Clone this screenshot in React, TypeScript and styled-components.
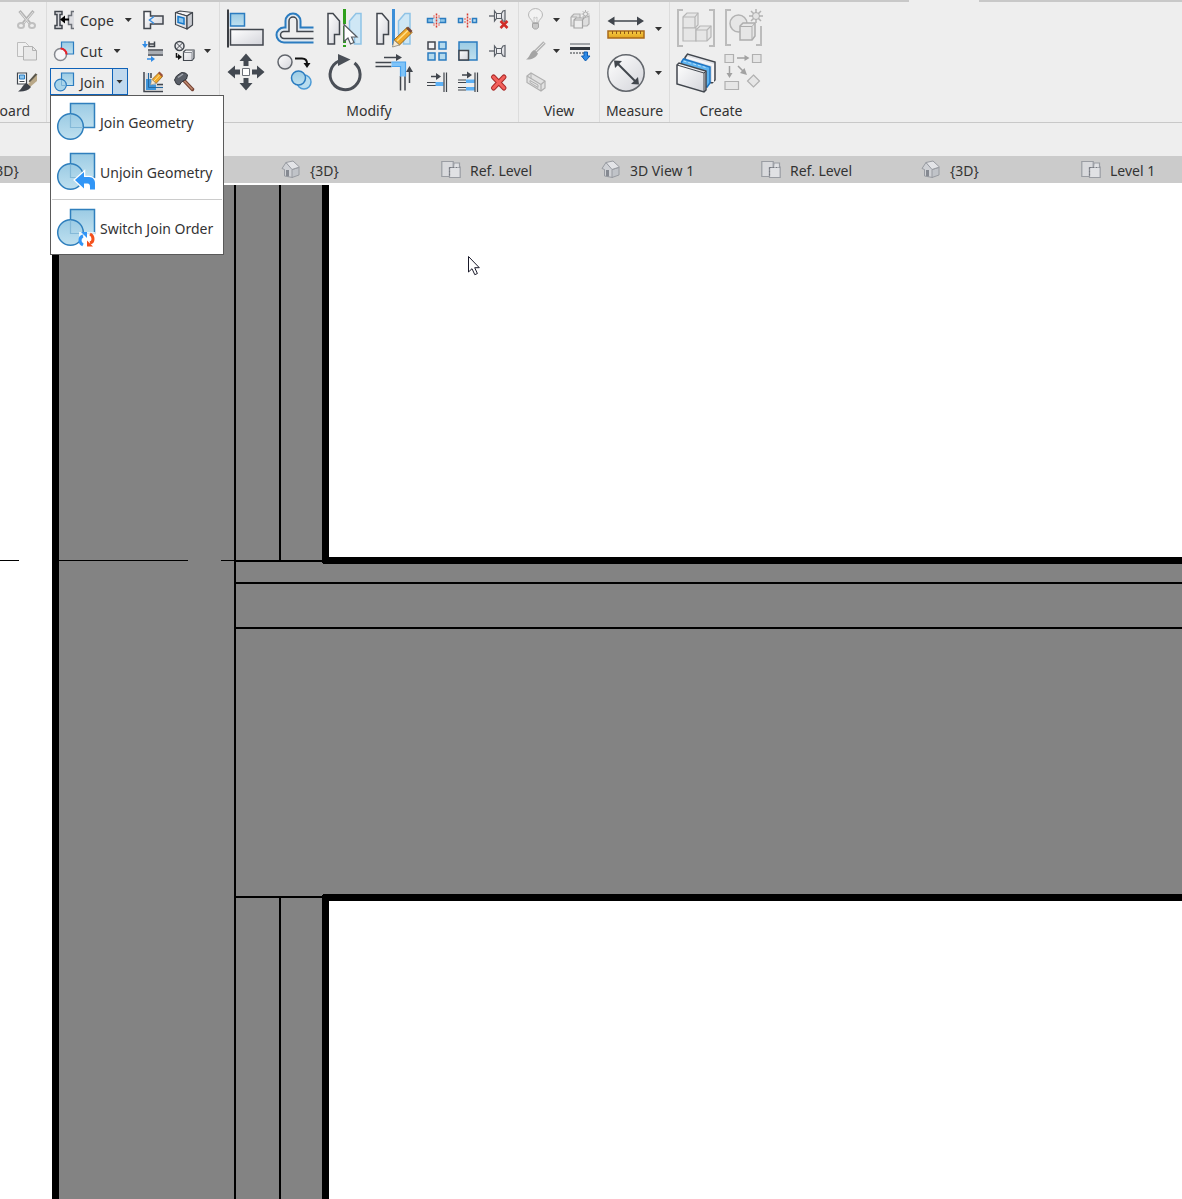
import React from "react";
import styled, { createGlobalStyle } from "styled-components";

const INK = "#41464d";
const BLUE = "#2b7cc0";
const MUTE = "#b0b0b0";

const GlobalStyle = createGlobalStyle`
  * { box-sizing: border-box; }
  body {
    margin: 0;
    background: #fff;
    color: #333;
    font: 14px/20px "Noto Sans", "Open Sans", sans-serif;
  }
  button {
    margin: 0;
    padding: 0;
    border: 0;
    background: none;
    color: inherit;
    font: inherit;
  }
`;

const Page = styled.div`
  display: flex;
  flex-direction: column;
  min-height: 100vh;
  overflow: hidden;
`;

const RibbonTabs = styled.div`
  display: flex;
  height: 2px;
  padding-left: 909px;
  background: #c8c8c8;
`;

const ActiveRibbonTab = styled.div`
  width: 70px;
  background: #eee;
`;

const Ribbon = styled.header`
  display: flex;
  height: 121px;
  background: #eee;
  border-bottom: 1px solid #c8c8c8;
`;

const Group = styled.section<{ $width: number; $last?: boolean }>`
  display: flex;
  flex: none;
  flex-direction: column;
  width: ${(p) => p.$width}px;
  padding-bottom: 1px;
  border-right: ${(p) => (p.$last ? 0 : 1)}px solid #dcdcdc;
`;

const GroupLabel = styled.h2<{ $clipped?: boolean }>`
  display: flex;
  justify-content: ${(p) => (p.$clipped ? "flex-end" : "center")};
  margin: auto 0 0;
  padding-right: ${(p) => (p.$clipped ? 16 : 0)}px;
  overflow: hidden;
  font-size: 14px;
  font-weight: 400;
  line-height: 20px;
`;

const Tools = styled.div<{ $columns: string; $left?: number }>`
  display: grid;
  grid-template-columns: ${(p) => p.$columns};
  grid-auto-rows: 27px;
  row-gap: 4px;
  justify-content: start;
  justify-items: start;
  padding: 4px 0 0 ${(p) => p.$left ?? 0}px;
`;

const LargeTools = styled.div<{ $columns: number; $gap?: number }>`
  display: grid;
  grid-template-columns: repeat(${(p) => p.$columns}, auto);
  gap: 6px ${(p) => p.$gap ?? 11}px;
  justify-content: start;
  padding: 8px 0 0 7px;
`;

const GroupBody = styled.div`
  display: flex;
  align-items: flex-start;
  gap: 15px;
`;

const ToolButton = styled.button<{ $gap?: number }>`
  display: flex;
  align-items: center;
  gap: ${(p) => p.$gap ?? 11}px;
  padding: 4px 0 3px;
`;

const LargeButton = styled.button`
  display: flex;
  align-items: center;
  gap: 10px;
`;

const LabelledTool = styled(ToolButton)`
  padding-left: 4px;
`;

const IconText = styled.span`
  display: flex;
  align-items: center;
  gap: 6px;
`;

const Label = styled.span`
  padding-top: 2px;
  line-height: 18px;
`;

const SplitButton = styled.div`
  position: relative;
  display: flex;
  height: 27px;
  border: 1px solid #0f62b8;
`;

const SplitMain = styled.button`
  padding: 3px 7px 2px 3px;
`;

const SplitArrow = styled.button`
  display: flex;
  align-items: center;
  justify-content: center;
  width: 15px;
  background: #c1d9ee;
  border-left: 1px solid #0f62b8;
`;

const Caret = styled.span`
  width: 7px;
  height: 4px;
  background: #333;
  clip-path: polygon(0 0, 100% 0, 50% 100%);
`;

const Menu = styled.div`
  position: absolute;
  z-index: 2;
  top: 26px;
  left: -1px;
  width: 174px;
  padding: 1px 0;
  background: #fff;
  border: 1px solid #5a5a5a;
`;

const MenuItem = styled.button`
  display: flex;
  align-items: center;
  gap: 5px;
  width: 100%;
  height: 50px;
  padding-left: 6px;
  white-space: nowrap;
`;

const MenuDivider = styled.hr`
  height: 1px;
  margin: 2px 1px 3px;
  border: 0;
  background: #ccc;
`;

const OptionsBar = styled.div`
  height: 33px;
  background: #eee;
`;

const ViewTabs = styled.nav`
  display: flex;
  height: 27px;
  padding-top: 1px;
  margin-left: -40px;
  overflow: hidden;
  background: #cbcbcb;
`;

const ViewTab = styled.button`
  display: flex;
  flex: none;
  align-items: center;
  gap: 9px;
  width: 160px;
  padding-left: 1px;
  white-space: nowrap;
`;

const Drawing = styled.main`
  display: flex;
  flex: 1;
  min-height: 1016px;
  background: #fff;
`;

const DrawingSvg = styled.svg`
  display: block;
  flex: 1;
  width: 100%;
`;

const Svg = styled.svg`
  display: block;
  flex: none;
  overflow: visible;
`;

const HiddenDefs = styled.svg`
  position: absolute;
  width: 0;
  height: 0;
`;

type IconProps = { size?: number; children: React.ReactNode };

const Icon = ({ size = 20, children }: IconProps) => (
  <Svg width={size} height={size} viewBox={`0 0 ${size} ${size}`} fill="none" aria-hidden="true">
    {children}
  </Svg>
);

const Gradients = () => (
  <HiddenDefs aria-hidden="true">
    <defs>
      <linearGradient id="sky" x1="0" y1="0" x2="0" y2="1">
        <stop offset="0" stopColor="#9bcbe4" />
        <stop offset="1" stopColor="#bfe0ef" />
      </linearGradient>
      <linearGradient id="steel" x1="0" y1="0" x2="1" y2="1">
        <stop offset="0" stopColor="#ffffff" />
        <stop offset="1" stopColor="#d3d4da" />
      </linearGradient>
      <linearGradient id="gold" x1="0" y1="0" x2="0" y2="1">
        <stop offset="0" stopColor="#f7cd4a" />
        <stop offset="1" stopColor="#e3a51b" />
      </linearGradient>
    </defs>
  </HiddenDefs>
);

/* ---------- small icons, 20 x 20 ---------- */

const ScissorsIcon = () => (
  <Icon>
    <path d="M2.500 1l11 13M16.500 1L5.500 14" stroke="#b4b4b4" strokeWidth="3" />
    <path d="M3 2l9 11M16 2L7 13" stroke="#e2e2e2" strokeWidth="1" />
    <ellipse cx="4" cy="15.500" rx="3" ry="2.500" stroke="#c0c0c0" strokeWidth="2" />
    <ellipse cx="15" cy="15.500" rx="3" ry="2.500" stroke="#c0c0c0" strokeWidth="2" />
  </Icon>
);

const CopyPagesIcon = () => (
  <Icon>
    <path d="M.5 1.500h8l3 3v11H.5z" fill="#f0f0f0" stroke="#bdbdbd" />
    <path d="M6.500 5.500h9l4 4v9.500h-13z" fill="#e9e9e9" stroke="#b2b2b2" />
    <path d="M15.500 5.500v4h4" stroke="#b2b2b2" />
  </Icon>
);

const MatchTypeIcon = () => (
  <Icon>
    <path d="M.5 1h9v11H.5z" fill="#fff" stroke={INK} strokeWidth="1.200" />
    <path d="M2.500 3h5v4h-5z" fill="#8ec6ee" stroke={BLUE} />
    <path d="M2.500 9.500h5" stroke={INK} />
    <path d="M19.500 2l-7 8" stroke="#5a564b" strokeWidth="2.500" />
    <path d="M20 3v6l-7 6-2-3z" fill="#b9a888" />
    <path d="M9.500 11l4.500 4c-3 4-8 5-13 4.500 4-2 4.500-7 8.500-8.500z" fill="#3c4149" />
  </Icon>
);

const CopeIcon = () => (
  <Icon>
    <path d="M1 1.500h7v3H6v11h2v3H1v-3h2v-11H1z" fill="#dcdde1" stroke={INK} strokeWidth="1.500" />
    <path d="M20 1.500h-2.500v4h-3v9h3v4H20" fill="#dcdde1" stroke="#6d7178" strokeWidth="1.500" />
    <path d="M15 9.500H9" stroke="#000" strokeWidth="2" />
    <path d="M6 9.500l5-4v8z" fill="#000" />
  </Icon>
);

const CutGeometryIcon = () => (
  <Icon>
    <path d="M7.500 1h12v12h-12z" fill="url(#sky)" stroke={BLUE} strokeWidth="1.200" />
    <circle cx="6.500" cy="13.500" r="6" fill="#f6f6f8" stroke="#85888e" strokeWidth="1.500" />
    <path d="M6.500 7.500a6 6 0 0 1 6 6" stroke="#e8202a" strokeWidth="2" />
  </Icon>
);

const JoinIcon = () => (
  <Icon>
    <path d="M7.500 1h12v12.500h-12z" fill="url(#sky)" stroke={BLUE} strokeWidth="1.200" />
    <circle cx="6.500" cy="13" r="5.800" fill="#a9d4ea" stroke={BLUE} strokeWidth="1.200" />
    <path d="M7.500 8v5.500h4.500" stroke="#79b3d8" />
  </Icon>
);

const WallJoinIcon = () => (
  <Icon>
    <path d="M1 1.500h6.500v4.500H20v8H7.500v4.500H1z" fill="url(#steel)" stroke={INK} strokeWidth="1.500" />
    <path d="M11 6.500L6.500 10l4.500 3.500" stroke="#3a8ee0" strokeWidth="1.500" />
  </Icon>
);

const WallOpeningIcon = () => (
  <Icon>
    <path d="M1.500 2.500L6 1l12.500 1.500L13 6z" fill="#f4f4f6" stroke={INK} strokeWidth="1.200" strokeLinejoin="round" />
    <path d="M1.500 2.500L13 6v13L1.500 14.500z" fill="url(#steel)" stroke={INK} strokeWidth="1.200" strokeLinejoin="round" />
    <path d="M13 6l5.500-3.500V15L13 19z" fill="#c9cbd1" stroke={INK} strokeWidth="1.200" strokeLinejoin="round" />
    <path d="M4 6.500L10 8v6l-6-1.500z" fill="#8ec6ee" stroke="#1577c8" strokeWidth="1.500" />
  </Icon>
);

const BeamJoinIcon = () => (
  <Icon>
    <path d="M2 0v4" stroke="#2f8be6" strokeWidth="1.500" />
    <path d="M-1 3h6l-3 4z" fill="#2f8be6" />
    <path d="M6 .5v5h5.500v-5M6 3h5.500" stroke={INK} strokeWidth="1.500" />
    <path d="M5 9h15M5 14h15" stroke={INK} strokeWidth="1.500" />
    <path d="M5 11.500h15" stroke="#aaaeb4" strokeWidth="3" />
    <path d="M4 18h5" stroke="#2f8be6" strokeWidth="1.500" />
    <path d="M8 15l4 3-4 3z" fill="#2f8be6" />
  </Icon>
);

const SplitFaceIcon = () => (
  <Icon>
    <circle cx="5.500" cy="5" r="4.500" fill="#e9e9ec" stroke={INK} strokeWidth="1.500" />
    <path d="M2.500 2l6 6M8.500 2l-6 6" stroke={INK} />
    <path d="M2.500 12v4H5" stroke="#111" strokeWidth="1.500" />
    <path d="M4 13l4 3-4 3z" fill="#111" />
    <path d="M9.500 11l2-2H20v8l-2 2.500H9.500z" fill="url(#steel)" stroke={INK} strokeWidth="1.200" />
    <path d="M9.500 11.500H18V19M18 11.500L20 9" stroke="#888c93" />
  </Icon>
);

const EditProfileIcon = () => (
  <Icon>
    <path d="M2.500 1v17H20v-5.500H8V1z" fill="#d7dade" />
    <path d="M3 7v11h10v-5.500H8V7z" fill="#3f95da" />
    <path d="M5.500 1v14.500H20" stroke="#24679f" />
    <path d="M1 0v19.500h19M8 1v5M14 12.500h6" stroke={INK} strokeWidth="1.500" />
    <path d="M9 7.500L15.500 1l4 3.500-6.500 7z" fill="#f0a92a" stroke="#8f5c14" strokeWidth=".8" />
    <path d="M11 9l6-6.500" stroke="#ffe08a" />
    <path d="M15 1l1.500-1.500L20 3l-1 2z" fill="#99503a" />
    <path d="M9 7.500L7.500 13l5.500-1.500z" fill="#f8ead0" stroke="#8a8a8a" strokeWidth=".6" />
  </Icon>
);

const HammerIcon = () => (
  <Icon>
    <path d="M10 8.500l8.500 9" stroke="#744031" strokeWidth="3.500" strokeLinecap="round" />
    <path d="M10 8.500l8.500 9" stroke="#c08a70" strokeWidth="1.500" />
    <path d="M.5 8l2-4 5-3.500 4 .5 2 2-1 4-5 3-2 3-3-1z" fill="#5a5f68" stroke="#30343a" />
    <path d="M4 5.500l5-3.500" stroke="#a4a8af" strokeWidth="1.500" />
  </Icon>
);

const SplitIcon = () => (
  <Icon>
    <path d="M.5 8.500h6v4h-6zM12.500 8.500h6v4h-6z" fill="#8ec6e8" stroke={BLUE} strokeWidth="1.500" />
    <path d="M6 8.500h7v4H6z" fill="#cfe2ee" />
    <path d="M9.500 3.500v14" stroke="#d8392f" strokeWidth="1.500" strokeDasharray="2 1" />
    <path d="M7 5v3M12 5v3M7 13v3M12 13v3" stroke="#e8756d" />
  </Icon>
);

const SplitGapIcon = () => (
  <Icon>
    <path d="M.5 8.500h4v4h-4zM14.500 8.500h4v4h-4z" fill="#b7dcf0" stroke={BLUE} strokeWidth="1.500" />
    <path d="M9.500 3.500v14" stroke="#d8392f" strokeWidth="1.500" strokeDasharray="2 1" />
    <path d="M7 8v5M12 8v5" stroke="#e0574e" strokeDasharray="2 1" />
  </Icon>
);

const PinShape = ({ y = 0 }: { y?: number }) => (
  <g transform={`translate(0 ${y})`}>
    <path d="M0 7h6" stroke="#6d7178" strokeWidth="1.500" />
    <path
      d="M5.500 2v10l2-2.500h5L14 12l2 .5V1.500L14 2l-1.500 2.500h-5z"
      fill="url(#steel)"
      stroke="#5b6068"
      strokeWidth="1.200"
    />
    <path d="M7.500 4.500v5M12.500 4.500v5" stroke="#5b6068" />
  </g>
);

const UnpinIcon = () => (
  <Icon>
    <PinShape y={-1} />
    <path d="M11.500 11l7 7M18.500 11l-7 7" stroke="#cf2b27" strokeWidth="2.500" />
  </Icon>
);

const PinIcon = () => (
  <Icon>
    <PinShape y={3} />
  </Icon>
);

const ArrayIcon = () => (
  <Icon>
    <path d="M1 1h7v7H1z" fill="#f2f2f4" stroke={INK} strokeWidth="1.500" />
    <path d="M12 1h7v7h-7zM1 12h7v7H1zM12 12h7v7h-7z" fill="#b4daee" stroke={BLUE} strokeWidth="1.500" />
  </Icon>
);

const ScaleIcon = () => (
  <Icon>
    <path d="M1 1h18v18H1z" fill="url(#sky)" stroke={BLUE} strokeWidth="1.500" />
    <path d="M1 9.500h9.500V19H1z" fill="url(#steel)" stroke={INK} strokeWidth="1.500" />
  </Icon>
);

const TrimSingleIcon = () => (
  <Icon>
    <path d="M4 4.500h6" stroke={INK} strokeWidth="1.500" />
    <path d="M9 1l5 3.500L9 8z" fill={INK} />
    <path d="M0 10.500h9M0 13.500h9" stroke={INK} strokeWidth="1.200" />
    <path d="M8.500 10h8v4h-8z" fill="#5cb0f5" />
    <path d="M17 .5V20M19.500 .5V20" stroke={INK} strokeWidth="1.200" />
  </Icon>
);

const TrimMultipleIcon = () => (
  <Icon>
    <path d="M4 3h6" stroke={INK} strokeWidth="1.500" />
    <path d="M9-.5L14 3 9 6.500z" fill={INK} />
    <path d="M0 8h8M0 10.500h8M0 15.500h8M0 18h8" stroke={INK} strokeWidth="1.200" />
    <path d="M8 7.500h9v3.500H8zM8 15h9v3.500H8z" fill="#5cb0f5" />
    <path d="M17 .5V20M19.500 .5V20" stroke={INK} strokeWidth="1.200" />
  </Icon>
);

const DeleteIcon = () => (
  <Icon>
    <path d="M4.500 5l10.500 11M15 5L4.500 16" stroke="#a92a28" strokeWidth="5" strokeLinecap="round" />
    <path d="M4.500 5l10.500 11M15 5L4.500 16" stroke="#f3605b" strokeWidth="3" strokeLinecap="round" />
  </Icon>
);

const BulbIcon = () => (
  <Icon>
    <path d="M6.500 12.500c0-3-4-4-4-7.500a6.500 6 0 0 1 14 0c0 3.500-4 4.500-4 7.500z" fill="#f2f2f2" stroke="#b6b6b6" />
    <path d="M6.500 13.500h6v4l-2 1.500h-2l-2-1.500z" fill="#c8c8c8" stroke="#a6a6a6" />
    <path d="M8 12V7l1.500 1L11 7v5" stroke="#c8c8c8" />
  </Icon>
);

const PaintbrushIcon = () => (
  <Icon>
    <path d="M18.500 1.500L9 11" stroke="#b6b6b6" strokeWidth="3.500" />
    <path d="M18 2l-8 8" stroke="#e2e2e2" />
    <path d="M8 9l4 3.500C10 17 5 19 0 18.500 4 16 4 11 8 9z" fill="#a4a4a4" />
  </Icon>
);

const SectionBoxIcon = () => (
  <Icon>
    <path d="M1 4l4-3 14 8v7l-4 3L1 10.500z" fill="#e2e2e2" stroke={MUTE} strokeWidth="1.200" />
    <path d="M1 4l14 8.500V19M15 12.500L19 9" stroke={MUTE} strokeWidth="1.200" />
    <path d="M4 8.500v2l8 5v-2.500zM5 1v6" stroke={MUTE} />
  </Icon>
);

const DisplaceIcon = () => (
  <Icon>
    <path d="M1 7l3-3h6v4M1 7v9h3M1 7h6M13 7h4l2-1v8l-2 2h-4" stroke={MUTE} strokeWidth="1.200" fill="#dedede" />
    <path d="M4 10l2-2h8l-1.500 2v8H4z" fill="#ededed" stroke="#a4a4a4" strokeWidth="1.200" />
    <path d="M4 10h8.500" stroke="#a4a4a4" />
    <path d="M15.500 0v8M11.500 4h8M12.700 1.200l5.600 5.600M18.300 1.200l-5.600 5.600" stroke="#b4b4b4" />
    <circle cx="15.500" cy="4" r="2" fill="#eee" stroke={MUTE} />
  </Icon>
);

const LineworkIcon = () => (
  <Icon>
    <path d="M0 3h20" stroke="#555b63" strokeWidth="1" />
    <path d="M0 7.500h20" stroke="#31363d" strokeWidth="3" />
    <path d="M0 12h14" stroke="#31363d" strokeWidth="1.200" strokeDasharray="2 1" />
    <path d="M14 11h3.500v4h2.500l-4.500 5-4-5H14z" fill="#2f8be6" stroke="#0f5fb4" />
  </Icon>
);

/* ---------- large icons, 38 x 38 ---------- */

const AlignIcon = () => (
  <Icon size={38}>
    <path d="M3.500 3.500h14v12.500h-14z" fill="url(#sky)" stroke={BLUE} strokeWidth="1.500" />
    <path d="M3.500 19.500h32.500V35H3.500z" fill="url(#steel)" stroke={INK} strokeWidth="1.500" />
    <path d="M1-.5v38" stroke="#3a3d42" strokeWidth="2" />
  </Icon>
);

const OffsetIcon = () => (
  <Icon size={38}>
    <path d="M37.500 17.500H24.500V11a7.500 7.500 0 0 0-15 0v6.500H8a7.500 7.500 0 0 0 0 15h29.500" fill="#e0e9f0" stroke={BLUE} strokeWidth="2" />
    <path d="M37.500 21.500H21V11a4 4 0 0 0-8 0v10.500H8a3.500 3.500 0 0 0 0 7h29.500" fill="#eee" stroke={INK} strokeWidth="1.500" />
  </Icon>
);

const MirrorHalves = () => (
  <>
    <path d="M3 3.500h5l6.500 7.500v13.500H9.500V34H3z" fill="url(#steel)" stroke={INK} strokeWidth="1.500" />
    <path d="M36 3.500h-5L24.500 11v13.500h5V34H36z" fill="#cfe7f5" stroke="#8fc3e6" strokeWidth="1.500" />
  </>
);

const MirrorPickIcon = () => (
  <Icon size={38}>
    <MirrorHalves />
    <path d="M19.500-1v38" stroke="#2fa01c" strokeWidth="3" strokeDasharray="15 2 17 2 3" />
    <path d="M19 14.500v17l4-3.500 2.500 6 3.500-1.500-2.500-5.500h5.500z" fill="#fff" stroke="#555a61" strokeWidth="1.200" />
  </Icon>
);

const MirrorDrawIcon = () => (
  <Icon size={38}>
    <MirrorHalves />
    <path d="M19.500-1v36" stroke="#3d8fd8" strokeWidth="3" />
    <path d="M20 30L33 17.500l5 5L25.500 35z" fill="#f0a92a" stroke="#9a6514" />
    <path d="M23 31l12-11.500" stroke="#ffe08a" strokeWidth="1.500" />
    <path d="M32 18.500l2-2 4.500 4.500-2 2z" fill="#76483a" />
    <path d="M20 30l-1.500 7 7-2z" fill="#f8ead0" stroke="#85817a" strokeWidth=".8" />
  </Icon>
);

const MoveIcon = () => (
  <Icon size={38}>
    <path
      d="M19-.5l6.500 7.500h-4v5h-5V7h-4zM19 36.500L12.500 29h4v-5h5v5h4zM.5 18L8 11.500v4h5v5H8v4zM37.500 18L30 11.500v4h-5v5h5v4z"
      fill="#434951"
    />
    <path d="M15.500 14.500h7v7h-7z" fill="#fff" stroke="#6d7178" />
  </Icon>
);

const CopyIcon = () => (
  <Icon size={38}>
    <circle cx="9" cy="8" r="7" fill="url(#steel)" stroke="#62666d" strokeWidth="1.500" />
    <path d="M19 4.500h7q5 0 5 5" stroke="#111" strokeWidth="2" />
    <path d="M27.500 9h7L31 14z" fill="#111" />
    <circle cx="28" cy="28" r="7" fill="#b9ddef" stroke="#4b9ad6" strokeWidth="1.500" />
    <circle cx="22.500" cy="24" r="7" fill="url(#sky)" stroke={BLUE} strokeWidth="1.500" />
  </Icon>
);

const RotateIcon = () => (
  <Icon size={38}>
    <path d="M14 7A15 15 0 1 0 29.500 9" stroke="#4a4f57" strokeWidth="3" />
    <path d="M13 0v12l12.500-6.500z" fill="#4a4f57" />
  </Icon>
);

const TrimCornerIcon = () => (
  <Icon size={38}>
    <path d="M10 3.500h14" stroke={INK} strokeWidth="1.500" />
    <path d="M22 0l6 3.500L22 7z" fill={INK} />
    <path d="M1.500 8.500h16M1.500 12.500h16M26.500 22v14.500M31 22v14.500" stroke={INK} strokeWidth="1.500" />
    <path d="M17.500 10.500H29v12" stroke="#80c4f8" strokeWidth="5" />
    <path d="M17.500 8h14v14.500M17.500 12.500h9v10" stroke="#4aa3ee" strokeWidth="1.200" />
    <path d="M35.500 29V16" stroke={INK} strokeWidth="1.500" />
    <path d="M32 18l3.500-6 3.500 6z" fill={INK} />
  </Icon>
);

const RulerIcon = () => (
  <Icon size={38}>
    <path d="M5 11h28" stroke={INK} strokeWidth="1.500" />
    <path d="M.5 11l7-4.500v9zM37 11l-7-4.500v9z" fill={INK} />
    <path d="M1 21h36v7H1z" fill="url(#gold)" stroke="#a96a1b" strokeWidth="1.500" />
    <path d="M5.500 21v3M9.500 21v3M13.500 21v3M17.500 21v3M21.500 21v3M25.500 21v3M29.500 21v3M33.500 21v3" stroke="#8d5716" />
  </Icon>
);

const DiameterIcon = () => (
  <Icon size={38}>
    <circle cx="19" cy="19" r="18.200" fill="url(#steel)" stroke="#63676d" strokeWidth="1.500" />
    <path d="M10 9l19 19" stroke={INK} strokeWidth="2" />
    <path d="M7 6.500l8 .5-7 7zM32 30.500l-8-.5 7-7z" fill={INK} />
  </Icon>
);

const AssemblyIcon = () => (
  <Icon size={38}>
    <path d="M6 0H1v36h5M32 0h5v36h-5" stroke="#bcbcbc" strokeWidth="2" />
    <g fill="#e6e6e6" stroke="#b6b6b6" strokeWidth="1.200">
      <path d="M6 7l4-4h11v12l-3 3H6z" />
      <path d="M6 18h13v13H6z" />
      <path d="M19 20l4-4h11v11l-4 4H19z" />
      <path d="M6 7h12v11M18 7l3-4M19 20h11v11M30 20l4-4" fill="none" />
    </g>
  </Icon>
);

const CreateGroupIcon = () => (
  <Icon size={38}>
    <path d="M6 0H1v35h5M31 35h5V16" stroke="#bcbcbc" strokeWidth="2" />
    <circle cx="13.500" cy="13.500" r="8.500" fill="#e6e6e6" stroke="#b3b3b3" strokeWidth="1.500" />
    <path d="M15 16l3-3h12v13l-3 4H15z" fill="#e6e6e6" stroke="#adadad" strokeWidth="1.500" />
    <path d="M15 16.500h12V30M27 16.500l3-3.500" stroke="#adadad" />
    <path d="M31-1v14M24 6h14M26 1l10 10M36 1L26 11" stroke="#b3b3b3" strokeWidth="1.500" />
    <circle cx="31" cy="6" r="3.500" fill="#e4e4e4" stroke="#adadad" />
  </Icon>
);

const PartsIcon = () => (
  <Icon size={38}>
    <path d="M8 3.500L10.500 0 38 8v18l-3 3L8 21z" fill="#dfe1e6" stroke={INK} strokeWidth="1.500" />
    <path d="M10 3.500L36 11v17" stroke="#f7f7f9" strokeWidth="2" />
    <path d="M4.500 8l2-3L33 13v16l-3 4-25-8z" fill="#5db2ee" stroke="#1c75c4" strokeWidth="1.500" />
    <path d="M6.500 7l24 7" stroke="#b7e0fa" strokeDasharray="3 2" />
    <path d="M0 11l2-2 27 8v19l-2 2L0 30z" fill="url(#steel)" stroke={INK} strokeWidth="1.500" />
    <path d="M0 11l27 8v19M27 19l2-2" stroke={INK} strokeWidth="1" />
  </Icon>
);

const SimilarIcon = () => (
  <Icon size={38}>
    <g fill="#e6e6e6" stroke="#b0b0b0" strokeWidth="1.200">
      <path d="M0 .5h8.500v8H0zM27.500 .5h8.500v8h-8.500zM0 27.500h13.500v8H0z" />
      <path d="M28.500 21l6 6-6 6-6-6z" />
    </g>
    <path d="M12 4h9M4.500 12v8M13 12l6 6" stroke="#a2a2a2" strokeWidth="1.500" />
    <path d="M19.500 1l5 3-5 3zM1.500 19h6l-3 5zM22 21l-7-2 4.500-5z" fill="#a2a2a2" />
  </Icon>
);

const JoinLarge = ({ children }: { children?: React.ReactNode }) => (
  <Icon size={38}>
    <path d="M13.500 .5h24v24h-24z" fill="url(#sky)" stroke="#2f7fbd" strokeWidth="1.500" />
    <circle cx="13.500" cy="23.500" r="12.800" fill="url(#sky)" stroke="#2f7fbd" strokeWidth="1.500" />
    <path d="M13.500 11.500v13H26" stroke="#84b9d8" strokeWidth="1.200" />
    {children}
  </Icon>
);

const UndoBadge = () => (
  <path
    d="M18 27l9-8v5h5c4 0 6 3 6 6v6.500h-5v-2.500c0-2-.5-3.500-2.500-3.500H27v5z"
    fill="#3296f6"
    stroke="#fff"
    strokeWidth="2.500"
    paintOrder="stroke"
  />
);

const SwapBadge = () => (
  <>
    <path d="M22 23h16v15H22z" fill="#fff" fillOpacity=".8" />
    <path d="M26 36c-4-2-4-8 0-9" stroke="#3296f6" strokeWidth="3" />
    <path d="M24 23h6v6z" fill="#3296f6" />
    <path d="M33 25c4 2 4 8 0 9" stroke="#f4501c" strokeWidth="3" />
    <path d="M36 37.500h-6v-6z" fill="#f4501c" />
  </>
);

/* ---------- view tab icons ---------- */

const HouseIcon = () => (
  <Icon>
    <path d="M1 8.500L5 2.500l6.500 6.500v8.500l-8-1.500V9.500z" fill="#cfd1d5" stroke="#989ba1" strokeLinejoin="round" />
    <path d="M11 9.500l7-2v7.500L11 17.500z" fill="#c0c3c8" stroke="#989ba1" strokeLinejoin="round" />
    <path d="M5 2.500L12 1l6.500 6-7.500 2.500z" fill="#e3e4e7" stroke="#989ba1" strokeLinejoin="round" />
    <path d="M5 10h3v6.500L5 16z" fill="#858991" />
  </Icon>
);

const PlanIcon = () => (
  <Icon>
    <path d="M.8 1.500h11.400v15H.8z" fill="#d9dadd" stroke="#9a9da3" strokeWidth="1.200" />
    <path d="M8.500 7.500h4l.5-4.500h5.500v4h.7v10.500H8.500z" fill="#e0e1e4" stroke="#9a9da3" strokeWidth="1.200" />
    <path d="M8.500 7.500h10M8.500 7.500v9" stroke="#777b82" strokeWidth="1.200" strokeDasharray="2 1" />
  </Icon>
);

const viewTabs = [
  { name: "{3D}", icon: <HouseIcon /> },
  { name: "", icon: null },
  { name: "{3D}", icon: <HouseIcon /> },
  { name: "Ref. Level", icon: <PlanIcon /> },
  { name: "3D View 1", icon: <HouseIcon /> },
  { name: "Ref. Level", icon: <PlanIcon /> },
  { name: "{3D}", icon: <HouseIcon /> },
  { name: "Level 1", icon: <PlanIcon /> },
];

type ToolProps = { name: string; icon: React.ReactNode; caret?: boolean; gap?: number };

const Tool = ({ name, icon, caret, gap }: ToolProps) => (
  <ToolButton aria-label={name} $gap={gap}>
    {icon}
    {caret && <Caret />}
  </ToolButton>
);

const LargeTool = ({ name, icon, caret }: ToolProps) => (
  <LargeButton aria-label={name}>
    {icon}
    {caret && <Caret />}
  </LargeButton>
);

const JoinControl = () => (
  <SplitButton>
    <SplitMain>
      <IconText>
        <JoinIcon />
        <Label>Join</Label>
      </IconText>
    </SplitMain>
    <SplitArrow aria-label="Join options" aria-expanded="true">
      <Caret />
    </SplitArrow>
    <Menu role="menu">
      <MenuItem role="menuitem">
        <JoinLarge />
        <Label>Join Geometry</Label>
      </MenuItem>
      <MenuItem role="menuitem">
        <JoinLarge>
          <UndoBadge />
        </JoinLarge>
        <Label>Unjoin Geometry</Label>
      </MenuItem>
      <MenuDivider />
      <MenuItem role="menuitem">
        <JoinLarge>
          <SwapBadge />
        </JoinLarge>
        <Label>Switch Join Order</Label>
      </MenuItem>
    </Menu>
  </SplitButton>
);

const SectionDrawing = () => (
  <DrawingSvg role="img" aria-label="Wall and floor section" shapeRendering="crispEdges">
    <rect x="52" y="2" width="277" height="100%" fill="#838383" />
    <rect x="236" y="374" width="100%" height="344" fill="#838383" />
    <rect x="52" y="2" width="7" height="100%" />
    <rect x="234" y="2" width="2" height="100%" />
    <rect x="279" y="2" width="2" height="375" />
    <rect x="322" y="2" width="7" height="378" />
    <rect x="323" y="374" width="100%" height="7" />
    <rect x="236" y="377" width="87" height="2" />
    <rect x="0" y="377" width="19" height="1" />
    <rect x="59" y="377" width="129" height="1" />
    <rect x="221" y="377" width="13" height="1" />
    <rect x="236" y="399" width="100%" height="2" />
    <rect x="236" y="444" width="100%" height="2" />
    <rect x="236" y="713" width="87" height="2" />
    <rect x="323" y="711" width="100%" height="7" />
    <rect x="322" y="712" width="7" height="100%" />
    <rect x="279" y="715" width="2" height="100%" />
    <path
      d="M468.500 73.500v15.500l3.500-3.300 2.800 6 2.600-1.200-2.700-5.800h4.600z"
      fill="#fff"
      stroke="#1a1a2a"
      shapeRendering="auto"
    />
  </DrawingSvg>
);

export default function App() {
  return (
    <Page>
      <GlobalStyle />
      <Gradients />
      <RibbonTabs>
        <ActiveRibbonTab />
      </RibbonTabs>
      <Ribbon>
        <Group $width={47}>
          <Tools $columns="20px" $left={17}>
            <Tool name="Cut to clipboard" icon={<ScissorsIcon />} />
            <Tool name="Copy to clipboard" icon={<CopyPagesIcon />} />
            <Tool name="Match type" icon={<MatchTypeIcon />} />
          </Tools>
          <GroupLabel $clipped>Clipboard</GroupLabel>
        </Group>

        <Group $width={173}>
          <Tools $columns="93px 31px auto" $left={3}>
            <LabelledTool>
              <IconText>
                <CopeIcon />
                <Label>Cope</Label>
              </IconText>
              <Caret />
            </LabelledTool>
            <Tool name="Wall joins" icon={<WallJoinIcon />} />
            <Tool name="Wall opening" icon={<WallOpeningIcon />} />
            <LabelledTool>
              <IconText>
                <CutGeometryIcon />
                <Label>Cut</Label>
              </IconText>
              <Caret />
            </LabelledTool>
            <Tool name="Beam joins" icon={<BeamJoinIcon />} />
            <Tool name="Split face" icon={<SplitFaceIcon />} caret gap={10} />
            <JoinControl />
            <Tool name="Edit profile" icon={<EditProfileIcon />} />
            <Tool name="Demolish" icon={<HammerIcon />} />
          </Tools>
        </Group>

        <Group $width={299}>
          <GroupBody>
            <LargeTools $columns={4}>
              <LargeTool name="Align" icon={<AlignIcon />} />
              <LargeTool name="Offset" icon={<OffsetIcon />} />
              <LargeTool name="Mirror, pick axis" icon={<MirrorPickIcon />} />
              <LargeTool name="Mirror, draw axis" icon={<MirrorDrawIcon />} />
              <LargeTool name="Move" icon={<MoveIcon />} />
              <LargeTool name="Copy" icon={<CopyIcon />} />
              <LargeTool name="Rotate" icon={<RotateIcon />} />
              <LargeTool name="Trim to corner" icon={<TrimCornerIcon />} />
            </LargeTools>
            <Tools $columns="31px 31px 20px">
              <Tool name="Split" icon={<SplitIcon />} />
              <Tool name="Split with gap" icon={<SplitGapIcon />} />
              <Tool name="Unpin" icon={<UnpinIcon />} />
              <Tool name="Array" icon={<ArrayIcon />} />
              <Tool name="Scale" icon={<ScaleIcon />} />
              <Tool name="Pin" icon={<PinIcon />} />
              <Tool name="Trim single" icon={<TrimSingleIcon />} />
              <Tool name="Trim multiple" icon={<TrimMultipleIcon />} />
              <Tool name="Delete" icon={<DeleteIcon />} />
            </Tools>
          </GroupBody>
          <GroupLabel>Modify</GroupLabel>
        </Group>

        <Group $width={81}>
          <Tools $columns="44px 20px" $left={7}>
            <Tool name="Hide in view" icon={<BulbIcon />} caret gap={7} />
            <Tool name="Displace" icon={<DisplaceIcon />} />
            <Tool name="Override graphics" icon={<PaintbrushIcon />} caret gap={7} />
            <Tool name="Linework" icon={<LineworkIcon />} />
            <Tool name="Selection box" icon={<SectionBoxIcon />} />
          </Tools>
          <GroupLabel>View</GroupLabel>
        </Group>

        <Group $width={70}>
          <LargeTools $columns={1}>
            <LargeTool name="Measure distance" icon={<RulerIcon />} caret />
            <LargeTool name="Dimension" icon={<DiameterIcon />} caret />
          </LargeTools>
          <GroupLabel>Measure</GroupLabel>
        </Group>

        <Group $width={102} $last>
          <LargeTools $columns={2} $gap={10}>
            <LargeTool name="Create assembly" icon={<AssemblyIcon />} />
            <LargeTool name="Create group" icon={<CreateGroupIcon />} />
            <LargeTool name="Create parts" icon={<PartsIcon />} />
            <LargeTool name="Create similar" icon={<SimilarIcon />} />
          </LargeTools>
          <GroupLabel>Create</GroupLabel>
        </Group>
      </Ribbon>
      <OptionsBar />
      <ViewTabs>
        {viewTabs.map((tab, i) => (
          <ViewTab key={i} aria-label={tab.name || "View"}>
            {tab.icon}
            <Label>{tab.name}</Label>
          </ViewTab>
        ))}
      </ViewTabs>
      <Drawing>
        <SectionDrawing />
      </Drawing>
    </Page>
  );
}
